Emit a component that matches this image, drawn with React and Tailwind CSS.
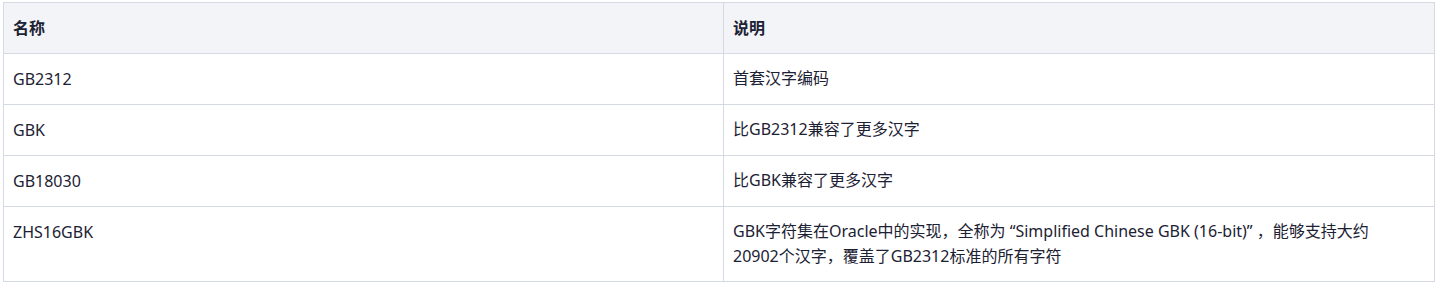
export default function App() {
  const rows = [
    { name: "GB2312", desc: "首套汉字编码" },
    { name: "GBK", desc: "比GB2312兼容了更多汉字" },
    { name: "GB18030", desc: "比GBK兼容了更多汉字" },
    {
      name: "ZHS16GBK",
      desc: (
        <>
          GBK字符集在Oracle中的实现，全称为 “Simplified Chinese GBK (16-bit)” ，能够支持大约
          <br />
          20902个汉字，覆盖了GB2312标准的所有字符
        </>
      ),
    },
  ];

  return (
    <div
      className="min-h-screen bg-white pt-[2px] pl-[3px] pr-[5px] text-[16px] text-[#1c2233]"
      style={{ fontFamily: '"Noto Sans", "Noto Sans CJK SC", sans-serif' }}
    >
      <table className="w-[1432px] border-collapse table-fixed">
        <thead>
          <tr className="bg-[#f3f4f7]">
            <th className="w-[720px] border border-[#d5d9e2] px-[9px] py-3 text-left font-bold leading-[26px]">名称</th>
            <th className="border border-[#d5d9e2] px-[9px] py-3 text-left font-bold leading-[26px]">说明</th>
          </tr>
        </thead>
        <tbody>
          {rows.map((r) => (
            <tr key={r.name}>
              <td className="border border-[#d5d9e2] px-[9px] py-3 align-top leading-[26px]">{r.name}</td>
              <td className="border border-[#d5d9e2] px-[9px] py-3 align-top leading-[25px]">{r.desc}</td>
            </tr>
          ))}
        </tbody>
      </table>
    </div>
  );
}
